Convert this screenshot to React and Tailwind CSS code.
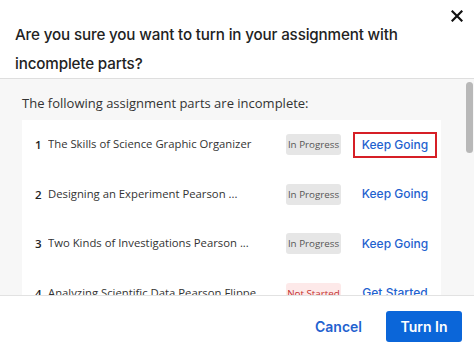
import React from "react";

const rows = [
  { n: 1, title: "The Skills of Science Graphic Organizer", status: "In Progress", action: "Keep Going", focus: true },
  { n: 2, title: "Designing an Experiment Pearson ...", status: "In Progress", action: "Keep Going" },
  { n: 3, title: "Two Kinds of Investigations Pearson ...", status: "In Progress", action: "Keep Going" },
  { n: 4, title: "Analyzing Scientific Data Pearson Flippe", status: "Not Started", action: "Get Started" },
];

export default function App() {
  return (
    <div className="w-[474px] h-[350px] bg-white flex flex-col overflow-hidden relative" style={{ fontFamily: "'Open Sans', sans-serif" }}>
      <div className="h-[79px] shrink-0 border-b border-[#dedede] relative pl-[15px] pt-[20px]">
        <h1 className="w-[425px] text-[15.2px] leading-[29px] tracking-[-0.15px] text-[#222] font-medium" style={{ fontFamily: "Inter, sans-serif" }}>
          Are you sure you want to turn in your assignment with incomplete parts?
        </h1>
        <button className="absolute top-[9px] right-[10px] w-[14px] h-[14px] flex items-center justify-center">
          <svg width="12" height="12" viewBox="0 0 12 12">
            <path d="M1.5 1.5 L10.5 10.5 M10.5 1.5 L1.5 10.5" stroke="#111" strokeWidth="2.2" strokeLinecap="square" />
          </svg>
        </button>
      </div>
      <div className="h-[216px] shrink-0 bg-[#f7f7f7] relative overflow-hidden">
        <div className="pl-[22px] pr-[33px] pt-[15px]">
          <p className="text-[13px] leading-[18px] text-[#333]">The following assignment parts are incomplete:</p>
          <div className="mt-[8px] bg-white">
            {rows.map((r) => (
              <div key={r.n} className="h-[49.5px] flex items-center pl-[13px]">
                <span className="w-[13px] text-[11.5px] font-semibold text-[#222]">{r.n}</span>
                <span className="w-[238px] text-[11.3px] text-[#333] whitespace-nowrap overflow-hidden">{r.title}</span>
                <span className={`h-[21px] rounded-[3px] text-[9.8px] leading-[21px] w-[55px] text-center whitespace-nowrap overflow-hidden ${r.status === "Not Started" ? "bg-[#fde9e9] text-[#c4312f]" : "bg-[#e6e6e6] text-[#555]"}`}>
                  {r.status}
                </span>
                <span className={`ml-[12px] h-[26px] w-[84px] flex items-center justify-center text-[12px] font-medium text-[#1f62cf] whitespace-nowrap ${r.focus ? "border-2 border-[#d61f26]" : "border-2 border-transparent"}`} style={{ fontFamily: "Inter, sans-serif" }}>
                  {r.action}
                </span>
              </div>
            ))}
          </div>
        </div>
        <div className="absolute right-[1px] top-[3px] w-[7px] h-[71px] rounded-[4px] bg-[#b8b8b8]" />
      </div>
      <div className="flex-1 border-t border-[#e2e2e2] flex justify-end items-start pt-[15px] pr-[12px]">
        <button className="h-[31px] px-[0px] mr-[24px] text-[14px] font-semibold text-[#1f62cf]" style={{ fontFamily: "Inter, sans-serif" }}>Cancel</button>
        <button className="h-[31px] w-[76px] rounded-[3px] bg-[#0b66d9] text-white text-[14px] font-semibold" style={{ fontFamily: "Inter, sans-serif" }}>Turn In</button>
      </div>
    </div>
  );
}
